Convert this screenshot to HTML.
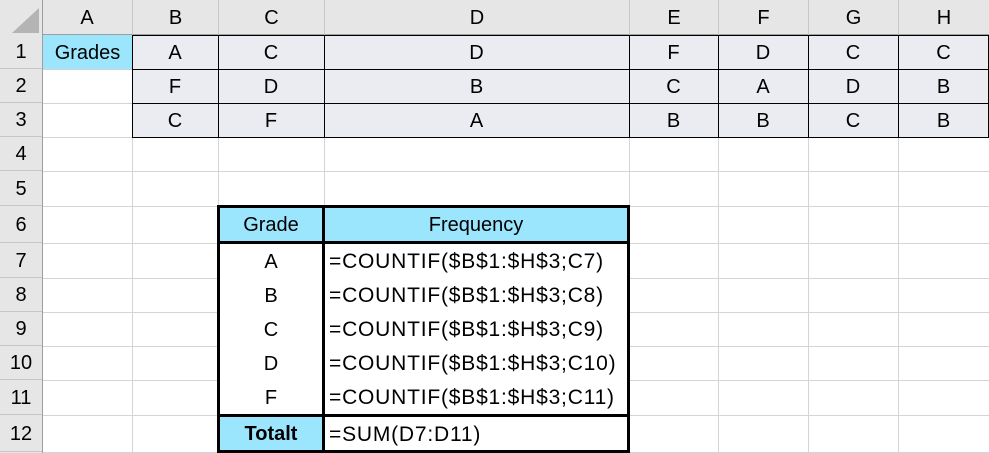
<!DOCTYPE html>
<html><head><meta charset="utf-8"><style>
*{margin:0;padding:0;box-sizing:border-box}
body{width:989px;height:453px;overflow:hidden;background:#fff;position:relative;font-family:"Liberation Sans",sans-serif;font-size:20px;color:#000}
.v{position:absolute;top:0;height:453px;width:1px;background:#d4d4d4}
.h{position:absolute;left:0;width:989px;height:1px;background:#d4d4d4}
.c{position:absolute;display:flex;align-items:center;justify-content:center;white-space:nowrap;padding-top:2px}
.l{justify-content:flex-start;padding-left:4px;font-size:21px;letter-spacing:0.8px}
</style></head><body>
<div class="v" style="left:132px"></div><div class="v" style="left:218px"></div><div class="v" style="left:324px"></div><div class="v" style="left:629px"></div><div class="v" style="left:718px"></div><div class="v" style="left:808px"></div><div class="v" style="left:898px"></div>
<div class="h" style="top:69px"></div><div class="h" style="top:103px"></div><div class="h" style="top:137px"></div><div class="h" style="top:171px"></div><div class="h" style="top:206px"></div><div class="h" style="top:243px"></div><div class="h" style="top:278px"></div><div class="h" style="top:312px"></div><div class="h" style="top:346px"></div><div class="h" style="top:380px"></div><div class="h" style="top:415px"></div><div class="h" style="top:452px"></div>
<div style="position:absolute;left:0;top:0;width:989px;height:35px;background:#e6e6e6;border-bottom:1px solid #9e9e9e"></div>
<div style="position:absolute;left:0;top:0;width:43px;height:453px;background:#e6e6e6;border-right:1px solid #9e9e9e"></div>
<div style="position:absolute;left:12px;top:8px;width:0;height:0;border-left:27px solid transparent;border-bottom:25px solid #b4b4b4"></div>
<div class="c" style="left:42px;top:0;width:90px;height:35px">A</div>
<div class="c" style="left:132px;top:0;width:86px;height:35px;border-left:1px solid #c6c6c6">B</div>
<div class="c" style="left:218px;top:0;width:106px;height:35px;border-left:1px solid #c6c6c6">C</div>
<div class="c" style="left:324px;top:0;width:305px;height:35px;border-left:1px solid #c6c6c6">D</div>
<div class="c" style="left:629px;top:0;width:89px;height:35px;border-left:1px solid #c6c6c6">E</div>
<div class="c" style="left:718px;top:0;width:90px;height:35px;border-left:1px solid #c6c6c6">F</div>
<div class="c" style="left:808px;top:0;width:90px;height:35px;border-left:1px solid #c6c6c6">G</div>
<div class="c" style="left:898px;top:0;width:91px;height:35px;border-left:1px solid #c6c6c6">H</div>
<div class="c" style="left:0;top:35px;width:42px;height:34px;border-bottom:1px solid #c6c6c6">1</div>
<div class="c" style="left:0;top:69px;width:42px;height:34px;border-bottom:1px solid #c6c6c6">2</div>
<div class="c" style="left:0;top:103px;width:42px;height:34px;border-bottom:1px solid #c6c6c6">3</div>
<div class="c" style="left:0;top:137px;width:42px;height:34px;border-bottom:1px solid #c6c6c6">4</div>
<div class="c" style="left:0;top:171px;width:42px;height:35px;border-bottom:1px solid #c6c6c6">5</div>
<div class="c" style="left:0;top:206px;width:42px;height:37px;border-bottom:1px solid #c6c6c6">6</div>
<div class="c" style="left:0;top:243px;width:42px;height:35px;border-bottom:1px solid #c6c6c6">7</div>
<div class="c" style="left:0;top:278px;width:42px;height:34px;border-bottom:1px solid #c6c6c6">8</div>
<div class="c" style="left:0;top:312px;width:42px;height:34px;border-bottom:1px solid #c6c6c6">9</div>
<div class="c" style="left:0;top:346px;width:42px;height:34px;border-bottom:1px solid #c6c6c6">10</div>
<div class="c" style="left:0;top:380px;width:42px;height:35px;border-bottom:1px solid #c6c6c6">11</div>
<div class="c" style="left:0;top:415px;width:42px;height:37px;border-bottom:1px solid #c6c6c6">12</div>
<div class="c" style="left:43px;top:35px;width:89px;height:34px;background:#9be5fd">Grades</div>
<div style="position:absolute;left:132px;top:35px;width:857px;height:103px;background:#ebebf2;border:1px solid #000"></div>
<div style="position:absolute;left:132px;top:69px;width:857px;height:1px;background:#000"></div>
<div style="position:absolute;left:132px;top:103px;width:857px;height:1px;background:#000"></div>
<div style="position:absolute;left:218px;top:35px;width:1px;height:103px;background:#000"></div>
<div style="position:absolute;left:324px;top:35px;width:1px;height:103px;background:#000"></div>
<div style="position:absolute;left:629px;top:35px;width:1px;height:103px;background:#000"></div>
<div style="position:absolute;left:718px;top:35px;width:1px;height:103px;background:#000"></div>
<div style="position:absolute;left:808px;top:35px;width:1px;height:103px;background:#000"></div>
<div style="position:absolute;left:898px;top:35px;width:1px;height:103px;background:#000"></div>
<div class="c" style="left:132px;top:35px;width:86px;height:34px">A</div><div class="c" style="left:218px;top:35px;width:106px;height:34px">C</div><div class="c" style="left:324px;top:35px;width:305px;height:34px">D</div><div class="c" style="left:629px;top:35px;width:89px;height:34px">F</div><div class="c" style="left:718px;top:35px;width:90px;height:34px">D</div><div class="c" style="left:808px;top:35px;width:90px;height:34px">C</div><div class="c" style="left:898px;top:35px;width:91px;height:34px">C</div>
<div class="c" style="left:132px;top:69px;width:86px;height:34px">F</div><div class="c" style="left:218px;top:69px;width:106px;height:34px">D</div><div class="c" style="left:324px;top:69px;width:305px;height:34px">B</div><div class="c" style="left:629px;top:69px;width:89px;height:34px">C</div><div class="c" style="left:718px;top:69px;width:90px;height:34px">A</div><div class="c" style="left:808px;top:69px;width:90px;height:34px">D</div><div class="c" style="left:898px;top:69px;width:91px;height:34px">B</div>
<div class="c" style="left:132px;top:103px;width:86px;height:34px">C</div><div class="c" style="left:218px;top:103px;width:106px;height:34px">F</div><div class="c" style="left:324px;top:103px;width:305px;height:34px">A</div><div class="c" style="left:629px;top:103px;width:89px;height:34px">B</div><div class="c" style="left:718px;top:103px;width:90px;height:34px">B</div><div class="c" style="left:808px;top:103px;width:90px;height:34px">C</div><div class="c" style="left:898px;top:103px;width:91px;height:34px">B</div>
<div style="position:absolute;left:217px;top:205px;width:413px;height:248px;background:#fff;border:3px solid #000"></div>
<div style="position:absolute;left:220px;top:208px;width:407px;height:34px;background:#9be5fd"></div>
<div style="position:absolute;left:220px;top:417px;width:103px;height:33px;background:#9be5fd"></div>
<div style="position:absolute;left:322px;top:205px;width:3px;height:248px;background:#000"></div>
<div style="position:absolute;left:217px;top:241px;width:413px;height:3px;background:#000"></div>
<div style="position:absolute;left:217px;top:414px;width:413px;height:3px;background:#000"></div>
<div class="c" style="left:220px;top:208px;width:102px;height:33px">Grade</div>
<div class="c" style="left:325px;top:208px;width:302px;height:33px">Frequency</div>
<div class="c" style="left:220px;top:244px;width:102px;height:34px">A</div>
<div class="c" style="left:220px;top:278px;width:102px;height:34px">B</div>
<div class="c" style="left:220px;top:312px;width:102px;height:34px">C</div>
<div class="c" style="left:220px;top:346px;width:102px;height:34px">D</div>
<div class="c" style="left:220px;top:380px;width:102px;height:34px">F</div>
<div class="c" style="left:220px;top:417px;width:102px;height:33px;font-weight:bold">Totalt</div>
<div class="c l" style="left:325px;top:244px;width:302px;height:34px">=COUNTIF($B$1:$H$3;C7)</div>
<div class="c l" style="left:325px;top:278px;width:302px;height:34px">=COUNTIF($B$1:$H$3;C8)</div>
<div class="c l" style="left:325px;top:312px;width:302px;height:34px">=COUNTIF($B$1:$H$3;C9)</div>
<div class="c l" style="left:325px;top:346px;width:302px;height:34px">=COUNTIF($B$1:$H$3;C10)</div>
<div class="c l" style="left:325px;top:380px;width:302px;height:34px">=COUNTIF($B$1:$H$3;C11)</div>
<div class="c l" style="left:325px;top:417px;width:302px;height:33px">=SUM(D7:D11)</div>
</body></html>
